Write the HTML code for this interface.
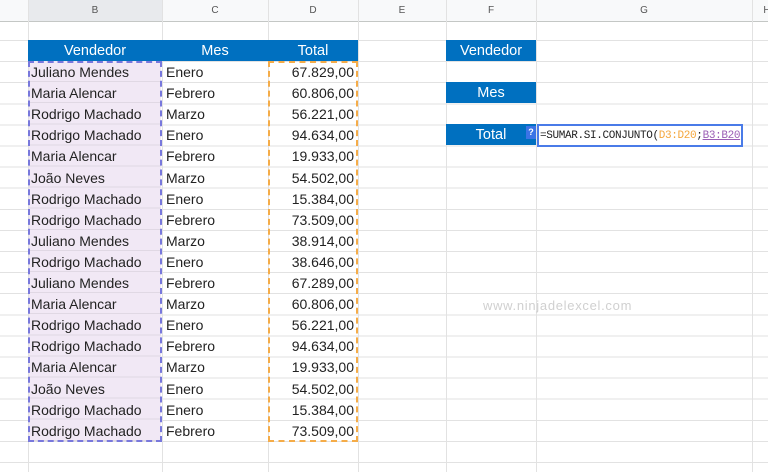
<html><head><style>
body{margin:0;width:768px;height:472px;overflow:hidden;background:#fff;font-family:"Liberation Sans",Arial,sans-serif;position:relative}
.a{position:absolute}
.vl{position:absolute;top:0;height:472px;width:1px;background:#e2e2e2}
.ch{position:absolute;top:0;height:21px;font-size:10px;color:#555;text-align:center;line-height:21px}
.c{position:absolute;height:21px;line-height:23px;font-size:14px;color:#222;white-space:nowrap}
.hd{position:absolute;background:#0070c0;color:#fff;font-size:14.5px;text-align:center;line-height:22px;height:21px}
</style></head><body>
<div class="a" style="left:0;top:0;width:768px;height:21px;background:#f8f9fa;border-bottom:1px solid #c4c7c5"></div>
<div class="a" style="left:28px;top:0;width:134px;height:21px;background:#e8eaed;border-bottom:1px solid #c4c7c5"></div>
<div class="ch" style="left:28px;width:134px">B</div>
<div class="ch" style="left:162px;width:106px">C</div>
<div class="ch" style="left:268px;width:90px">D</div>
<div class="ch" style="left:358px;width:88px">E</div>
<div class="ch" style="left:446px;width:90px">F</div>
<div class="ch" style="left:536px;width:216px">G</div>
<div class="ch" style="left:752px;width:30px">H</div>
<div class="vl" style="left:28px"></div><div class="vl" style="left:162px"></div><div class="vl" style="left:268px"></div><div class="vl" style="left:358px"></div><div class="vl" style="left:446px"></div><div class="vl" style="left:536px"></div><div class="vl" style="left:752px"></div>
<div class="a" style="left:0;top:40px;width:768px;height:432px;background:repeating-linear-gradient(to bottom,#e2e2e2 0,#e2e2e2 1px,transparent 1px,transparent 21.1px)"></div>
<div class="hd" style="left:28px;top:40px;width:134px">Vendedor</div>
<div class="hd" style="left:162px;top:40px;width:106px">Mes</div>
<div class="hd" style="left:268px;top:40px;width:90px">Total</div>
<div class="hd" style="left:446px;top:40px;width:90px">Vendedor</div>
<div class="hd" style="left:446px;top:82px;width:90px">Mes</div>
<div class="hd" style="left:446px;top:124px;width:90px">Total</div>
<div class="a" style="left:29px;top:61px;width:132px;height:380px;background:#f1e8f5;background-image:repeating-linear-gradient(to bottom,transparent 0,transparent 20.1px,#e0d8e4 20.1px,#e0d8e4 21.1px)"></div>
<div class="a" style="left:28px;top:61px;width:130px;height:377px;border:2px dashed #7878dc"></div>
<div class="a" style="left:268px;top:61px;width:86px;height:377px;border:2px dashed #f5ac48"></div>
<div class="c" style="left:31px;top:61px">Juliano Mendes</div><div class="c" style="left:166px;top:61px">Enero</div><div class="c" style="left:268px;width:86px;text-align:right;top:61px">67.829,00</div>
<div class="c" style="left:31px;top:82.1px">Maria Alencar</div><div class="c" style="left:166px;top:82.1px">Febrero</div><div class="c" style="left:268px;width:86px;text-align:right;top:82.1px">60.806,00</div>
<div class="c" style="left:31px;top:103.2px">Rodrigo Machado</div><div class="c" style="left:166px;top:103.2px">Marzo</div><div class="c" style="left:268px;width:86px;text-align:right;top:103.2px">56.221,00</div>
<div class="c" style="left:31px;top:124.3px">Rodrigo Machado</div><div class="c" style="left:166px;top:124.3px">Enero</div><div class="c" style="left:268px;width:86px;text-align:right;top:124.3px">94.634,00</div>
<div class="c" style="left:31px;top:145.4px">Maria Alencar</div><div class="c" style="left:166px;top:145.4px">Febrero</div><div class="c" style="left:268px;width:86px;text-align:right;top:145.4px">19.933,00</div>
<div class="c" style="left:31px;top:166.5px">João Neves</div><div class="c" style="left:166px;top:166.5px">Marzo</div><div class="c" style="left:268px;width:86px;text-align:right;top:166.5px">54.502,00</div>
<div class="c" style="left:31px;top:187.6px">Rodrigo Machado</div><div class="c" style="left:166px;top:187.6px">Enero</div><div class="c" style="left:268px;width:86px;text-align:right;top:187.6px">15.384,00</div>
<div class="c" style="left:31px;top:208.7px">Rodrigo Machado</div><div class="c" style="left:166px;top:208.7px">Febrero</div><div class="c" style="left:268px;width:86px;text-align:right;top:208.7px">73.509,00</div>
<div class="c" style="left:31px;top:229.8px">Juliano Mendes</div><div class="c" style="left:166px;top:229.8px">Marzo</div><div class="c" style="left:268px;width:86px;text-align:right;top:229.8px">38.914,00</div>
<div class="c" style="left:31px;top:250.9px">Rodrigo Machado</div><div class="c" style="left:166px;top:250.9px">Enero</div><div class="c" style="left:268px;width:86px;text-align:right;top:250.9px">38.646,00</div>
<div class="c" style="left:31px;top:272px">Juliano Mendes</div><div class="c" style="left:166px;top:272px">Febrero</div><div class="c" style="left:268px;width:86px;text-align:right;top:272px">67.289,00</div>
<div class="c" style="left:31px;top:293.1px">Maria Alencar</div><div class="c" style="left:166px;top:293.1px">Marzo</div><div class="c" style="left:268px;width:86px;text-align:right;top:293.1px">60.806,00</div>
<div class="c" style="left:31px;top:314.2px">Rodrigo Machado</div><div class="c" style="left:166px;top:314.2px">Enero</div><div class="c" style="left:268px;width:86px;text-align:right;top:314.2px">56.221,00</div>
<div class="c" style="left:31px;top:335.3px">Rodrigo Machado</div><div class="c" style="left:166px;top:335.3px">Febrero</div><div class="c" style="left:268px;width:86px;text-align:right;top:335.3px">94.634,00</div>
<div class="c" style="left:31px;top:356.4px">Maria Alencar</div><div class="c" style="left:166px;top:356.4px">Marzo</div><div class="c" style="left:268px;width:86px;text-align:right;top:356.4px">19.933,00</div>
<div class="c" style="left:31px;top:377.5px">João Neves</div><div class="c" style="left:166px;top:377.5px">Enero</div><div class="c" style="left:268px;width:86px;text-align:right;top:377.5px">54.502,00</div>
<div class="c" style="left:31px;top:398.6px">Rodrigo Machado</div><div class="c" style="left:166px;top:398.6px">Enero</div><div class="c" style="left:268px;width:86px;text-align:right;top:398.6px">15.384,00</div>
<div class="c" style="left:31px;top:419.7px">Rodrigo Machado</div><div class="c" style="left:166px;top:419.7px">Febrero</div><div class="c" style="left:268px;width:86px;text-align:right;top:419.7px">73.509,00</div>
<div class="a" style="left:526px;top:126px;width:10px;height:13px;background:#3b73e6;color:#fff;font-size:9px;font-weight:bold;text-align:center;line-height:13px">?</div>
<div class="a" style="left:537px;top:124px;width:201px;height:19px;background:#fff;border:2px solid #4a7be8;font-family:'Liberation Mono',monospace;font-size:11px;line-height:20px;padding-left:1px;color:#222;white-space:nowrap;letter-spacing:-0.35px;overflow:hidden">=SUMAR.SI.CONJUNTO(<span style="color:#f4a63c">D3:D20</span>;<span style="color:#9a5cb4;text-decoration:underline">B3:B20</span></div>
<div class="a" style="left:483px;top:298px;font-size:13px;color:#d0d0d0;letter-spacing:0.7px">www.ninjadelexcel.com</div>
</body></html>
